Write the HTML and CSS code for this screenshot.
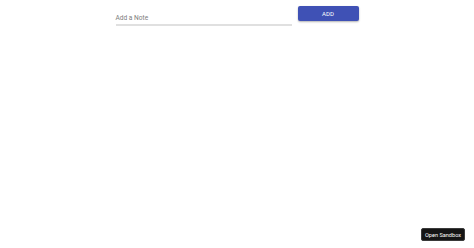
FILE: index.html
```html
<!DOCTYPE html>
<html>
<head>
<meta charset="utf-8">
<link rel="stylesheet" href="styles.css">
</head>
<body>
<div class="row">
  <div class="field">
    <span class="placeholder">Add a Note</span>
  </div>
  <button class="add">ADD</button>
</div>
<a class="sandbox">Open Sandbox</a>
</body>
</html>
```
FILE: styles.css
```css
html, body {
  margin: 0;
  padding: 0;
  background: #fff;
  font-family: Roboto, "Liberation Sans", sans-serif;
}
body {
  width: 474px;
  height: 248px;
  position: relative;
  overflow: hidden;
}
.row {
  display: flex;
  justify-content: center;
  align-items: flex-start;
  gap: 6px;
  padding-top: 6px;
}
.field {
  width: 176px;
  height: 20px;
  border-bottom: 2px solid #e0e0e0;
  display: flex;
  align-items: flex-end;
  padding-bottom: 2px;
  box-sizing: border-box;
}
.placeholder {
  font-size: 6.6px;
  color: #7d7d7d;
  line-height: 8px;
}
.add {
  width: 61px;
  height: 15px;
  border: none;
  border-radius: 2px;
  background: #3f51b5;
  color: #fff;
  font-family: Roboto, "Liberation Sans", sans-serif;
  font-size: 6px;
  font-weight: 400;
  letter-spacing: 0.1px;
  padding: 0;
  box-shadow: 0 1px 2px rgba(0,0,0,0.3);
}
.sandbox {
  position: absolute;
  right: 9px;
  bottom: 7px;
  width: 44px;
  height: 13px;
  background: #151515;
  color: #fff;
  font-size: 5.6px;
  display: flex;
  align-items: center;
  justify-content: center;
  border-radius: 2px;
  border: 1px solid #3a3a3a;
  box-sizing: border-box;
}
```
